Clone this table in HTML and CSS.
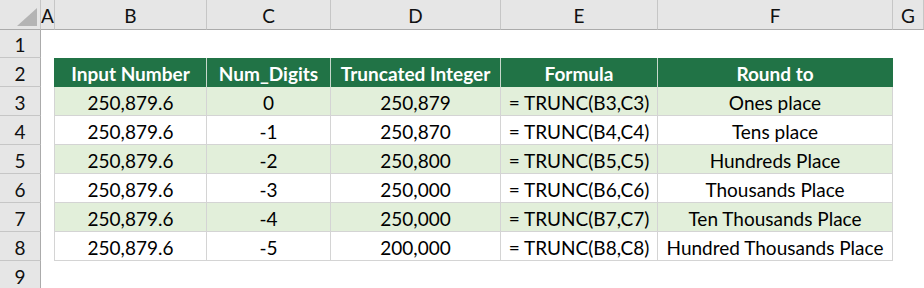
FILE: index.html
```html
<!DOCTYPE html>
<html>
<head>
<meta charset="utf-8">
<link rel="stylesheet" href="styles.css">
</head>
<body>
<div class="sheet">
  <div class="corner"><svg class="tri" width="20" height="18" viewBox="0 0 20 18"><polygon points="20,0 20,18 0,18" fill="#b4b4b4"/></svg></div>
  <div class="ch">A</div><div class="ch">B</div><div class="ch">C</div><div class="ch">D</div><div class="ch">E</div><div class="ch">F</div><div class="ch">G</div><div class="ch rest"></div>

  <div class="rh">1</div><div class="c"></div><div class="c"></div><div class="c"></div><div class="c"></div><div class="c"></div><div class="c"></div><div class="c"></div><div class="c"></div>

  <div class="rh">2</div><div class="c edge-h"></div><div class="th">Input Number</div><div class="th">Num_Digits</div><div class="th">Truncated Integer</div><div class="th">Formula</div><div class="th last">Round to</div><div class="c"></div><div class="c"></div>

  <div class="rh">3</div><div class="c edge"></div><div class="td alt">250,879.6</div><div class="td alt">0</div><div class="td alt">250,879</div><div class="td alt">= TRUNC(B3,C3)</div><div class="td alt">Ones place</div><div class="c"></div><div class="c"></div>

  <div class="rh">4</div><div class="c edge"></div><div class="td">250,879.6</div><div class="td">-1</div><div class="td">250,870</div><div class="td">= TRUNC(B4,C4)</div><div class="td">Tens place</div><div class="c"></div><div class="c"></div>

  <div class="rh">5</div><div class="c edge"></div><div class="td alt">250,879.6</div><div class="td alt">-2</div><div class="td alt">250,800</div><div class="td alt">= TRUNC(B5,C5)</div><div class="td alt">Hundreds Place</div><div class="c"></div><div class="c"></div>

  <div class="rh">6</div><div class="c edge"></div><div class="td">250,879.6</div><div class="td">-3</div><div class="td">250,000</div><div class="td">= TRUNC(B6,C6)</div><div class="td">Thousands Place</div><div class="c"></div><div class="c"></div>

  <div class="rh">7</div><div class="c edge"></div><div class="td alt">250,879.6</div><div class="td alt">-4</div><div class="td alt">250,000</div><div class="td alt">= TRUNC(B7,C7)</div><div class="td alt">Ten Thousands Place</div><div class="c"></div><div class="c"></div>

  <div class="rh">8</div><div class="c edge"></div><div class="td">250,879.6</div><div class="td">-5</div><div class="td">200,000</div><div class="td">= TRUNC(B8,C8)</div><div class="td">Hundred Thousands Place</div><div class="c"></div><div class="c"></div>

  <div class="rh">9</div><div class="c"></div><div class="c"></div><div class="c"></div><div class="c"></div><div class="c"></div><div class="c"></div><div class="c"></div><div class="c"></div>
</div>
</body>
</html>
```
FILE: styles.css
```css
* { box-sizing: border-box; }
html, body { margin: 0; padding: 0; background: #fff; }
body { font-family: Lato, "Liberation Sans", sans-serif; color: #000; }

.sheet {
  display: grid;
  grid-template-columns: 41px 14px 152px 124px 170px 157px 235px 31px 1fr;
  grid-template-rows: 30px 28px 29px 29px 29px 29px 29px 29px 29px 29px;
  width: 924px;
  height: 288px;
  overflow: hidden;
}

.corner {
  background: #e6e6e6;
  border-right: 1px solid #c6c6c6;
  border-bottom: 1px solid #ababab;
  position: relative;
}
.tri { position: absolute; left: 17px; top: 8px; }

.ch {
  background: #e6e6e6;
  border-right: 1px solid #c6c6c6;
  border-bottom: 1px solid #ababab;
  display: flex;
  align-items: center;
  justify-content: center;
  font-size: 19px;
  color: #111;
  padding-top: 1px;
}
.ch.rest { border-right: none; }

.rh {
  background: #e6e6e6;
  border-right: 1px solid #ababab;
  border-bottom: 1px solid #c6c6c6;
  display: flex;
  align-items: center;
  justify-content: center;
  font-size: 19px;
  color: #111;
  padding-top: 2px;
}

.c { background: #fff; }
.edge { border-right: 1px solid #d4d4d4; }
.edge-h { border-right: 1px solid #217346; }

.th {
  background: #217346;
  color: #fff;
  font-weight: bold;
  font-size: 19px;
  display: flex;
  align-items: center;
  justify-content: center;
  border-right: 1px solid #c8d8cc;
  padding-top: 2px;
  white-space: nowrap;
}
.th.last { border-right: 1px solid #217346; }

.td {
  background: #fff;
  font-size: 19px;
  display: flex;
  align-items: center;
  justify-content: center;
  border-right: 1px solid #d4d4d4;
  border-bottom: 1px solid #d4d4d4;
  padding-top: 3px;
  white-space: nowrap;
}
.td.alt { background: #e2efda; }
```
